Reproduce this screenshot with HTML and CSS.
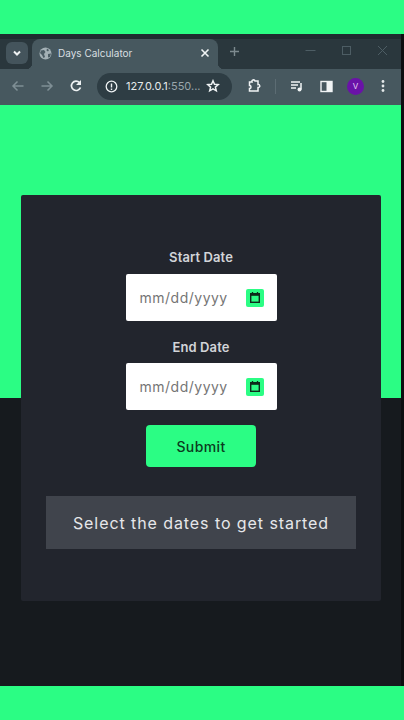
FILE: index.html
```html
<!DOCTYPE html>
<html lang="en">
<head>
<meta charset="utf-8">
<title>Days Calculator</title>
<link rel="stylesheet" href="styles.css">
</head>
<body>
<div class="band"></div>
<div class="window">
<div class="browser">
  <div class="tabstrip">
    <div class="tabsearch"><svg width="12" height="12" viewBox="0 0 12 12"><path d="M3 4.500 6 7.500 9 4.500" fill="none" stroke="#eef2f3" stroke-width="2"/></svg></div>
    <div class="tab">
      <svg class="globe" width="13" height="13" viewBox="0 0 13 13"><circle cx="6.500" cy="6.500" r="6" fill="#a3b0b5"/><path d="M2 3.500 5 3 6.500 5 5 7 6 10 4.500 11 3 8 1 6ZM8 1.500 10 3 9 4.500 7.500 3.500ZM9 7 12 6.500 11 10 9 10.500Z" fill="#4b5c64"/></svg>
      <span class="tabtitle">Days Calculator</span>
      <svg width="10" height="10" viewBox="0 0 10 10"><path d="M1.500 1.500 8.500 8.500M8.500 1.500 1.500 8.500" stroke="#f1f4f5" stroke-width="1.600"/></svg>
    </div>
    <svg class="plus" width="11" height="11" viewBox="0 0 11 11"><path d="M5.500 1V10M1 5.500H10" stroke="#7d8a8f" stroke-width="1.400"/></svg>
    <div class="winctrls">
      <svg width="11" height="11" viewBox="0 0 11 11"><path d="M0.500 5.500H10.500" stroke="#4d5d64" stroke-width="1"/></svg>
      <svg width="11" height="11" viewBox="0 0 11 11"><rect x="1.500" y="1.500" width="8" height="8" fill="none" stroke="#4d5d64"/></svg>
      <svg width="11" height="11" viewBox="0 0 11 11"><path d="M1 1 10 10M10 1 1 10" stroke="#4d5d64"/></svg>
    </div>
  </div>
  <div class="toolbar">
    <svg class="nav" width="14" height="14" viewBox="0 0 14 14"><path d="M12.500 7H2M6.500 2.500 2 7 6.500 11.500" fill="none" stroke="#7f8f95" stroke-width="1.500"/></svg>
    <svg class="nav" width="14" height="14" viewBox="0 0 14 14"><path d="M1.500 7H12M7.500 2.500 12 7 7.500 11.500" fill="none" stroke="#7f8f95" stroke-width="1.500"/></svg>
    <svg class="nav" width="14" height="14" viewBox="0 0 14 14"><path d="M11.500 8.500A4.700 4.700 0 1 1 10.500 3.500" fill="none" stroke="#eef2f3" stroke-width="1.700"/><path d="M12 1V6H7Z" fill="#eef2f3"/></svg>
    <div class="omnibox">
      <svg width="13" height="13" viewBox="0 0 13 13"><circle cx="6.500" cy="6.500" r="5.300" fill="none" stroke="#eef2f3" stroke-width="1.300"/><path d="M6.500 3.500V7.500M6.500 8.500V10" stroke="#eef2f3" stroke-width="1.400"/></svg>
      <span class="url">127.0.0.1<span class="port">:550...</span></span>
      <svg width="14" height="14" viewBox="0 0 14 14"><path d="M7 1.800 8.500 5.300 12.300 5.600 9.400 8.100 10.300 11.800 7 9.900 3.700 11.800 4.600 8.100 1.700 5.600 5.500 5.300Z" fill="none" stroke="#eef2f3" stroke-width="1.500"/></svg>
    </div>
    <svg class="ext" width="14" height="14" viewBox="0 0 14 14"><path d="M2.500 3H5A1.500 1.500 0 0 1 8 2H11V5.500A1.500 1.500 0 0 1 11.500 8.500H11V12H2.500V9.500A1.500 1.500 0 0 0 2.500 6.500Z" fill="none" stroke="#f1f4f5" stroke-width="1.500"/></svg>
    <div class="sep"></div>
    <svg class="media" width="14" height="14" viewBox="0 0 14 14"><path d="M1 3H10M1 6H8M1 9H6" stroke="#f1f4f5" stroke-width="1.400"/><path d="M11 4V10.500" stroke="#f1f4f5" stroke-width="1.500"/><circle cx="9.500" cy="10.500" r="2" fill="#f1f4f5"/></svg>
    <svg class="panel" width="13" height="13" viewBox="0 0 13 13"><rect x="1" y="1.500" width="11" height="10" fill="none" stroke="#f1f4f5" stroke-width="1.400"/><rect x="6.500" y="1.500" width="5.500" height="10" fill="#f1f4f5"/></svg>
    <div class="avatar">V</div>
    <svg class="menu" width="4" height="14" viewBox="0 0 4 14"><circle cx="2" cy="2.500" r="1.400" fill="#e4e9ea"/><circle cx="2" cy="7" r="1.400" fill="#e4e9ea"/><circle cx="2" cy="11.500" r="1.400" fill="#e4e9ea"/></svg>
  </div>
</div>
<main class="page">
  <section class="card">
    <form class="form">
      <label class="label">Start Date</label>
      <div class="field">
        <span class="placeholder">mm/dd/yyyy</span>
        <span class="calendar"><svg width="10" height="11" viewBox="0 0 10 11"><path d="M2.500 0V2M7.500 0V2" stroke="#0d2a1a" stroke-width="1.300"/><rect x="0.700" y="1.700" width="8.600" height="8.600" fill="none" stroke="#0d2a1a" stroke-width="1.400"/><rect x="1" y="1.500" width="8" height="2.300" fill="#0d2a1a"/></svg></span>
      </div>
      <label class="label label-end">End Date</label>
      <div class="field field-end">
        <span class="placeholder">mm/dd/yyyy</span>
        <span class="calendar"><svg width="10" height="11" viewBox="0 0 10 11"><path d="M2.500 0V2M7.500 0V2" stroke="#0d2a1a" stroke-width="1.300"/><rect x="0.700" y="1.700" width="8.600" height="8.600" fill="none" stroke="#0d2a1a" stroke-width="1.400"/><rect x="1" y="1.500" width="8" height="2.300" fill="#0d2a1a"/></svg></span>
      </div>
      <button class="submit" type="button">Submit</button>
    </form>
    <div class="result">Select the dates to get started</div>
  </section>
</main>
</div>
<div class="band"></div>
</body>
</html>
```
FILE: styles.css
```css
* { box-sizing: border-box; }
html, body { margin: 0; padding: 0; }
body {
  width: 404px;
  height: 720px;
  overflow: hidden;
  display: flex;
  flex-direction: column;
  font-family: "Inter", "Liberation Sans", sans-serif;
  background: #2bfd84;
}
.band { height: 34px; flex: none; background: #2bfd84; }
.window { flex: 1; min-height: 0; display: flex; flex-direction: column; padding-right: 3px; background: #0c0e10; }
.browser { flex: none; height: 71px; background: #1d2a30; }
.tabstrip { height: 35px; display: flex; align-items: center; background: linear-gradient(#1f2b30 0 5px, #2a373d 5px); padding-left: 6px; }
.tabsearch { width: 22px; height: 22px; margin-top: 2px; border-radius: 6px; background: #44545c; display: flex; align-items: center; justify-content: center; }
.tab {
  position: relative;
  width: 186px; height: 30px; margin: 5px 0 0 4px;
  align-self: flex-start;
  display: flex; align-items: center; gap: 6px;
  background: #47585f; border-radius: 8px 8px 0 0; padding: 0 8px 2px 7px;
}
.tab::before, .tab::after { content: ""; position: absolute; bottom: 0; width: 6px; height: 6px; }
.tab::before { left: -6px; background: radial-gradient(circle at 0 0, transparent 6px, #47585f 6.500px); }
.tab::after { right: -6px; background: radial-gradient(circle at 100% 0, transparent 6px, #47585f 6.500px); }
.tabtitle { flex: 1; font-size: 10px; color: #d8dfe1; }
.plus { margin-left: 11px; }
.winctrls { margin-left: auto; display: flex; gap: 25px; margin-right: 13px; margin-top: -2px; }
.toolbar { height: 36px; display: flex; align-items: center; background: #47585f; padding: 0 0 2px 11px; }
.nav { margin-right: 15px; }
.nav:nth-child(3) { margin-right: 14px; }
.omnibox { width: 135px; height: 27px; background: #2e3d44; border-radius: 13.500px; display: flex; align-items: center; padding: 0 12px 0 8px; }
.url { flex: 1; font-size: 11px; color: #e6ebec; margin-left: 8px; white-space: nowrap; }
.port { color: #99a6ab; }
.ext { margin-left: 15px; }
.sep { width: 1px; height: 15px; background: #5c6c73; margin-left: 14px; }
.media { margin-left: 14px; }
.panel { margin-left: 16px; }
.avatar { width: 17px; height: 17px; border-radius: 50%; background: #6a12a8; color: #e3d0f2; font-size: 8px; display: flex; align-items: center; justify-content: center; margin-left: 14px; }
.menu { margin-left: 17px; }
.page {
  flex: 1;
  min-height: 0;
  padding: 90px 20px 85px 21px;
  background: linear-gradient(#2bfd84 0 293px, #161a1e 293px);
}
.card { height: 406px; background: #22252d; border-radius: 2px; padding: 53px 25px 0; }
.form { display: flex; flex-direction: column; align-items: center; }
.label { font-size: 13px; line-height: 18px; font-weight: 600; color: #d2d4d8; letter-spacing: 0.1px; }
.label-end { margin-top: 17px; }
.field { width: 151px; height: 47px; margin-top: 8px; background: #fff; border-radius: 2px; display: flex; align-items: center; justify-content: space-between; padding: 0 13px 0 14px; }
.field-end { margin-top: 7px; }
.placeholder { font-size: 14px; color: #757575; letter-spacing: 0.5px; }
.calendar { width: 18px; height: 18px; background: #2bfd84; border-radius: 2px; display: flex; align-items: center; justify-content: center; }
.submit { width: 110px; height: 42px; margin-top: 15px; border: 0; border-radius: 4px; background: #2bfd84; color: #0b3a20; font: 500 14px "Inter", "Liberation Sans", sans-serif; letter-spacing: 0.4px; }
.result { height: 53px; margin-top: 29px; background: #40444c; display: flex; align-items: center; justify-content: center; color: #e6e7ea; font-size: 16px; letter-spacing: 0.92px; white-space: nowrap; }
```
